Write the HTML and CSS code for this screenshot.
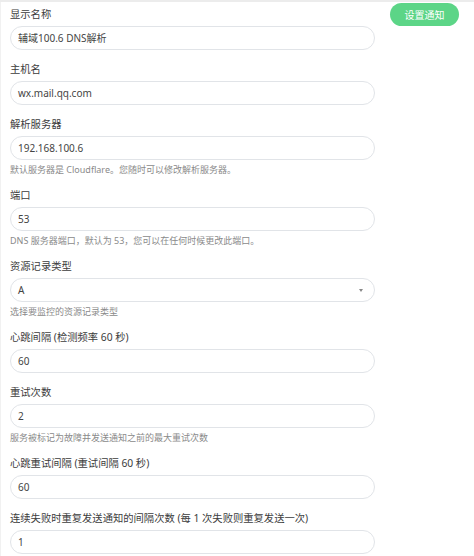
FILE: index.html
```html
<!DOCTYPE html>
<html lang="zh-CN">
<head>
<meta charset="utf-8">
<title>编辑监控项</title>
<link rel="stylesheet" href="styles.css">
</head>
<body>
<div class="topbar"></div>
<div class="page">
  <form class="form">
    <div class="group">
      <label class="label">显示名称</label>
      <div class="input">辅域100.6 DNS解析</div>
    </div>
    <div class="group">
      <label class="label">主机名</label>
      <div class="input">wx.mail.qq.com</div>
    </div>
    <div class="group">
      <label class="label">解析服务器</label>
      <div class="input">192.168.100.6</div>
      <div class="help">默认服务器是 Cloudflare。您随时可以修改解析服务器。</div>
    </div>
    <div class="group">
      <label class="label">端口</label>
      <div class="input">53</div>
      <div class="help">DNS 服务器端口，默认为 53，您可以在任何时候更改此端口。</div>
    </div>
    <div class="group">
      <label class="label">资源记录类型</label>
      <div class="input select">A<span class="caret"></span></div>
      <div class="help">选择要监控的资源记录类型</div>
    </div>
    <div class="group">
      <label class="label">心跳间隔 (检测频率 60 秒)</label>
      <div class="input">60</div>
    </div>
    <div class="group">
      <label class="label">重试次数</label>
      <div class="input">2</div>
      <div class="help">服务被标记为故障并发送通知之前的最大重试次数</div>
    </div>
    <div class="group">
      <label class="label">心跳重试间隔 (重试间隔 60 秒)</label>
      <div class="input">60</div>
    </div>
    <div class="group">
      <label class="label">连续失败时重复发送通知的间隔次数 (每 1 次失败则重复发送一次)</label>
      <div class="input">1</div>
    </div>
  </form>
  <aside class="side">
    <button class="btn" type="button">设置通知</button>
  </aside>
</div>
</body>
</html>
```

FILE: styles.css
```css
html, body {
  margin: 0;
  padding: 0;
  background: #ffffff;
  font-family: "Noto Sans", "Noto Sans CJK SC", sans-serif;
  color: #3a3a3a;
}

.topbar {
  height: 2px;
  background: #ececec;
}

.page {
  display: flex;
  align-items: flex-start;
  gap: 15px;
  padding-left: 10px;
  border-left: 1px solid #f1f1f1;
}

.form {
  width: 365px;
  padding-top: 4px;
  margin-left: -1px;
}

.group {
  display: flex;
  flex-direction: column;
  margin-bottom: 11px;
}

.label {
  display: block;
  font-size: 10.3px;
  line-height: 16px;
  height: 16px;
  margin-bottom: 4px;
  color: #3c3c3c;
  white-space: nowrap;
}

.input {
  box-sizing: border-box;
  height: 24px;
  border: 1px solid #e1e4e8;
  border-radius: 12px;
  padding: 0 8px 0 7px;
  font-size: 10px;
  line-height: 22px;
  color: #444444;
  background: #fff;
  position: relative;
}

.select .caret {
  position: absolute;
  right: 11px;
  top: 10px;
  width: 0;
  height: 0;
  border-left: 2.5px solid transparent;
  border-right: 2.5px solid transparent;
  border-top: 3px solid #888;
}

.help {
  margin-top: 3px;
  font-size: 9px;
  line-height: 13px;
  color: #8a8a8a;
  white-space: nowrap;
}

.side {
  padding-top: 0;
}

.btn {
  width: 69px;
  height: 23px;
  border: none;
  border-radius: 12px;
  background: #5cd587;
  color: #ffffff;
  font-family: "Noto Sans CJK SC", sans-serif;
  font-size: 10px;
  line-height: 23px;
  padding: 0;
  cursor: pointer;
}
```
